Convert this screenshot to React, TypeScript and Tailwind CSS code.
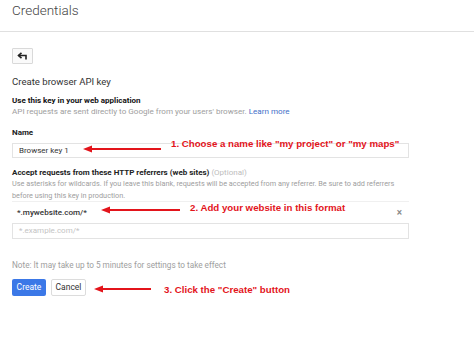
const roboto = { fontFamily: "Roboto, 'Liberation Sans', sans-serif" };

function Arrow({ x, y, w }: { x: number; y: number; w: number }) {
  return (
    <svg
      className="absolute"
      style={{ left: x, top: y - 4 }}
      width={w}
      height={8}
      viewBox={`0 0 ${w} 8`}
    >
      <line x1={6} y1={4} x2={w} y2={4} stroke="#e3141b" strokeWidth={2.2} />
      <polygon points={`0,4 9,0.5 9,7.5`} fill="#e3141b" />
    </svg>
  );
}

function Note({ x, y, text }: { x: number; y: number; text: string }) {
  return (
    <div
      className="absolute whitespace-nowrap text-[9.7px] font-bold leading-none text-[#e3141b]"
      style={{ left: x, top: y - 5, fontFamily: "'Liberation Sans', Arial, sans-serif" }}
    >
      {text}
    </div>
  );
}

export default function App() {
  return (
    <div className="relative h-[351px] w-[474px] overflow-hidden bg-white text-[#212121]" style={roboto}>
      <div className="h-[32px] border-b border-[#e0e0e0] px-3 pt-[2px]">
        <h1 className="text-[13.5px] font-light leading-[17px] text-[#444]">Credentials</h1>
      </div>

      <div className="px-3">
        <button className="mt-[16px] flex h-[16px] w-[21px] items-center justify-center rounded-[1px] border border-[#d9d9d9] bg-[#fafafa]">
          <svg width="11" height="8" viewBox="0 0 11 8" fill="none" stroke="#222" strokeWidth="1.6">
            <path d="M1.5 3.5h7.5v4" />
            <path d="M4.5 0.8L1.5 3.5L4.5 6.2" />
          </svg>
        </button>

        <div className="mt-[11px] text-[9.6px] leading-[14px] text-[#333]">Create browser API key</div>

        <div className="mt-[6px] text-[8px] font-bold leading-[11px] text-[#111]">Use this key in your web application</div>
        <div className="text-[8.1px] leading-[11px] text-[#9e9e9e]">
          API requests are sent directly to Google from your users' browser.{" "}
          <span className="text-[#3f6fc8]">Learn more</span>
        </div>

        <div className="mt-[10px] text-[8px] font-bold leading-[11px] text-[#222]">Name</div>
        <div className="mt-[5px] flex h-[15px] w-[397px] items-center border border-[#e3e3e3] bg-white pl-[6px] text-[8px] text-[#333]">
          Browser key 1
        </div>

        <div className="mt-[9px] text-[8px] font-bold leading-[11px] text-[#222]">
          Accept requests from these HTTP referrers (web sites){" "}
          <span className="font-normal text-[#bdbdbd]">(Optional)</span>
        </div>
        <div className="text-[7.3px] leading-[11.5px] text-[#9e9e9e]">
          Use asterisks for wildcards. If you leave this blank, requests will be accepted from any referrer. Be sure to add referrers
          <br />
          before using this key in production.
        </div>

        <div className="flex h-[22px] w-[397px] items-center justify-between border-t border-[#f0f0f0] pl-[5px] pr-[7px] text-[8.1px] font-medium text-[#333]">
          <span>*.mywebsite.com/*</span>
          <span className="text-[10px] text-[#888]">×</span>
        </div>
        <div className="flex h-[16px] w-[397px] items-center border border-[#e3e3e3] pl-[6px] text-[8px] text-[#c4c4c4]">
          *.example.com/*
        </div>

        <div className="mt-[21px] text-[8.2px] leading-[11px] text-[#9e9e9e]">
          Note: It may take up to 5 minutes for settings to take effect
        </div>

        <div className="mt-[8px] flex gap-[5px]">
          <button className="h-[17px] w-[34px] rounded-[2px] bg-[#3b78e7] text-[8.5px] text-white">Create</button>
          <button className="h-[17px] w-[35px] rounded-[2px] border border-[#dcdcdc] bg-white text-[8.5px] text-[#333]">Cancel</button>
        </div>
      </div>

      <Arrow x={83} y={149} w={78} />
      <Note x={171} y={144} text={'1. Choose a name like "my project" or "my maps"'} />
      <Arrow x={101} y={210} w={79} />
      <Note x={190} y={208} text="2. Add your website in this format" />
      <Arrow x={94} y={289} w={57} />
      <Note x={164} y={290} text={'3. Click the "Create" button'} />
    </div>
  );
}
